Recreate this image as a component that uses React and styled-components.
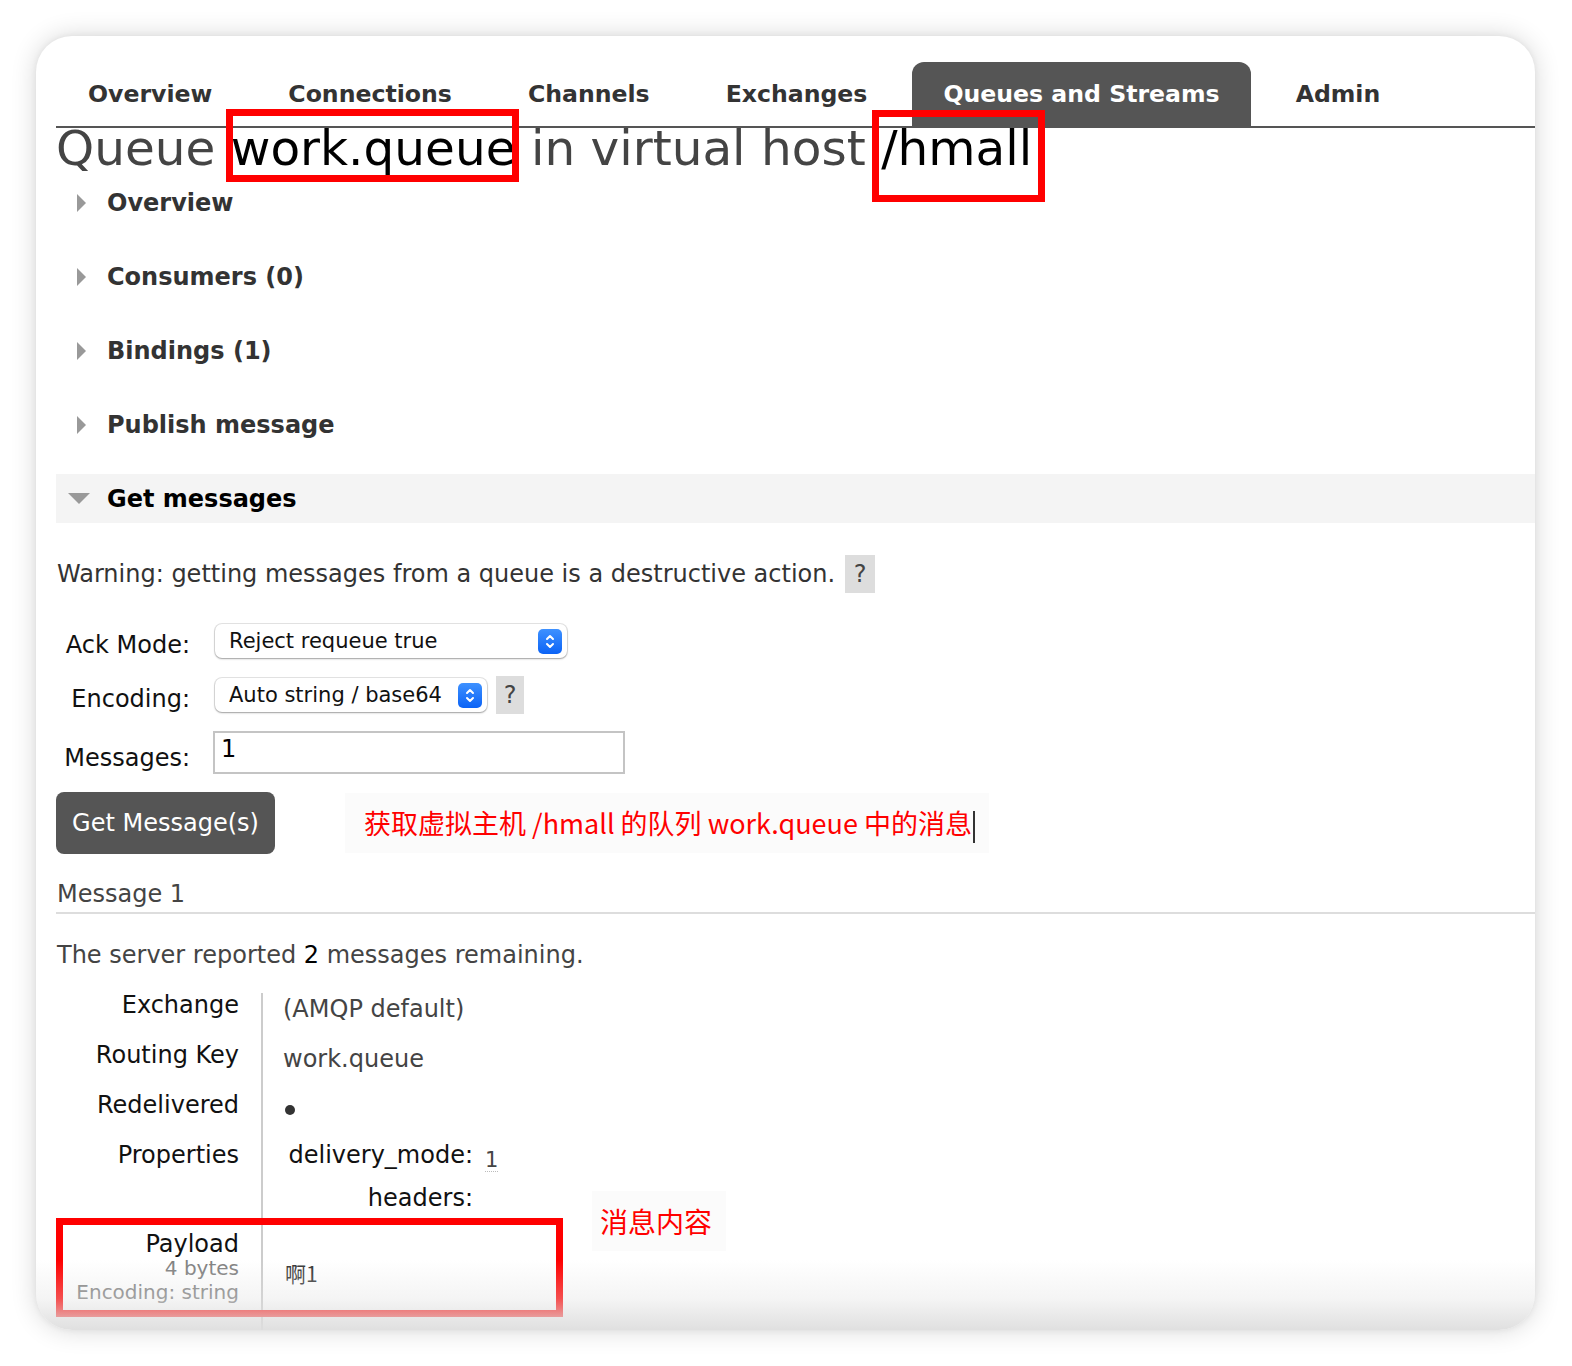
import React from "react";
import styled, { createGlobalStyle } from "styled-components";

const GlobalStyle = createGlobalStyle`
  html, body {
    margin: 0;
    padding: 0;
    background: #fff;
  }
  body {
    font-family: "DejaVu Sans", Verdana, sans-serif;
    color: #444;
  }
`;

const Page = styled.div`
  width: 1572px;
  height: 1366px;
  padding: 36px 37px 36px 36px;
  box-sizing: border-box;
`;

const Card = styled.div`
  position: relative;
  width: 1499px;
  height: 1294px;
  border-radius: 36px;
  background: #fff;
  overflow: hidden;
  box-shadow: 0 0 26px rgba(0, 0, 0, 0.16), 0 0 6px rgba(0, 0, 0, 0.06);
  padding-left: 20px;
  box-sizing: border-box;

  &::after {
    content: "";
    position: absolute;
    left: 0;
    right: 0;
    bottom: 0;
    height: 70px;
    background: linear-gradient(
      to bottom,
      rgba(225, 225, 225, 0),
      rgba(225, 225, 225, 0.35) 55%,
      rgba(222, 222, 222, 0.95)
    );
    pointer-events: none;
  }
`;

// top navigation
const Nav = styled.ul`
  display: flex;
  gap: 14px;
  list-style: none;
  margin: 26px 0 0 0;
  padding: 0 0 0 1px;
  border-bottom: 2px solid #555;
`;

const NavItem = styled.li`
  padding: 0 31px;
  height: 64px;
  line-height: 64px;
  font-size: 23.6px;
  font-weight: bold;
  color: ${(p) => (p.$active ? "#fff" : "#333")};
  background: ${(p) => (p.$active ? "#555" : "transparent")};
  border-radius: 12px 12px 0 0;
  white-space: nowrap;
`;

const Title = styled.h1`
  position: relative;
  margin: 0;
  font-size: 48.5px;
  font-weight: normal;
  line-height: 41px;
  color: #444;
  white-space: nowrap;

  b {
    font-weight: normal;
    color: #000;
  }
`;

// red annotation boxes drawn over the screenshot
const Mark = styled.span`
  position: absolute;
  border: 7px solid #ff0000;
  box-sizing: border-box;
  pointer-events: none;
`;

const Note = styled.span`
  font-family: "Noto Sans CJK SC", sans-serif;
  font-size: ${(p) => p.$size || 27}px;
  font-weight: 400;
  color: #ff0000;
  background: #fbfbfb;
  padding: 10px 14px 10px ${(p) => p.$pl || 8}px;
  white-space: nowrap;
`;

const Sections = styled.div`
  margin-top: 9px;
`;

const SectionHead = styled.div`
  display: flex;
  align-items: center;
  height: 49px;
  margin-bottom: 25px;
  font-size: 24px;
  font-weight: bold;
  color: ${(p) => (p.$open ? "#000" : "#333")};
  background: ${(p) => (p.$open ? "#f4f4f4" : "transparent")};
`;

const Toggle = styled.span`
  width: 51px;
  display: flex;
  justify-content: center;
`;

const Arrow = ({ open }) =>
  open ? (
    <svg width="22" height="12" viewBox="0 0 22 12" style={{ marginLeft: -6 }}>
      <path d="M0 0 L22 0 L11 11 Z" fill="#999" />
    </svg>
  ) : (
    <svg width="10" height="18" viewBox="0 0 10 18">
      <path d="M0 0 L9 9 L0 18 Z" fill="#999" />
    </svg>
  );

const Section = ({ title, open }) => (
  <SectionHead $open={open}>
    <Toggle>
      <Arrow open={open} />
    </Toggle>
    {title}
  </SectionHead>
);

const Warning = styled.p`
  display: flex;
  align-items: center;
  gap: 10px;
  margin: 32px 0 0 1px;
  font-size: 24px;
  color: #333;
`;

const Help = styled.span`
  display: inline-flex;
  align-items: center;
  justify-content: center;
  width: ${(p) => p.$w || 30}px;
  height: 38px;
  background: #ddd;
  color: #444;
  font-size: 24px;
`;

const Form = styled.div`
  display: grid;
  grid-template-columns: 134px auto;
  column-gap: 23px;
  row-gap: 17px;
  align-items: center;
  margin-top: 30px;
  justify-items: start;
`;

const Label = styled.label`
  justify-self: end;
  font-size: 24px;
  color: #111;
  padding-top: ${(p) => p.$drop || 8}px;
`;

const Control = styled.div`
  display: flex;
  align-items: center;
  gap: 9px;
`;

const Select = styled.div`
  display: flex;
  align-items: center;
  justify-content: space-between;
  width: ${(p) => p.$w}px;
  height: 34px;
  box-sizing: border-box;
  padding: 0 5px 0 14px;
  margin-left: 2px;
  border-radius: 7px;
  background: #fff;
  box-shadow: 0 0 0 1px rgba(0, 0, 0, 0.1), 0 1px 2px rgba(0, 0, 0, 0.3);
  font-size: 21px;
  color: #111;
`;

const Stepper = styled.span`
  display: flex;
  align-items: center;
  justify-content: center;
  width: 24px;
  height: 25px;
  border-radius: 5px;
  background: linear-gradient(#3e91ff, #0b63f6);
`;

const Chevrons = () => (
  <svg width="12" height="17" viewBox="0 0 12 17">
    <path
      d="M3 6 L6 3 L9 6 M3 11 L6 14 L9 11"
      fill="none"
      stroke="#fff"
      strokeWidth="2"
      strokeLinecap="round"
      strokeLinejoin="round"
    />
  </svg>
);

const Input = styled.div`
  width: 412px;
  height: 43px;
  box-sizing: border-box;
  border: 2px solid #c4c4c4;
  padding: 2px 6px;
  font-size: 24px;
  color: #000;
`;

const ActionRow = styled.div`
  display: flex;
  align-items: center;
  gap: 70px;
  margin-top: 18px;
`;

const Button = styled.div`
  display: flex;
  align-items: center;
  justify-content: center;
  width: 219px;
  height: 62px;
  border-radius: 8px;
  background: #555;
  color: #fff;
  font-size: 24px;
`;

const Caret = styled.span`
  display: inline-block;
  width: 2px;
  height: 32px;
  margin-left: 1px;
  vertical-align: middle;
  background: #333;
`;

const MessageHead = styled.div`
  margin-top: 26px;
  padding: 0 0 4px 1px;
  border-bottom: 2px solid #ddd;
  font-size: 24px;
  color: #444;
`;

const Remaining = styled.p`
  margin: 27px 0 0 1px;
  font-size: 24px;
  color: #444;

  b {
    font-weight: normal;
    color: #000;
  }
`;

const Details = styled.div`
  position: relative;
  display: grid;
  grid-template-columns: 207px 1fr;
  margin-top: 24px;
`;

const Th = styled.div`
  padding: 0 22px ${(p) => p.$pb ?? 26}px 0;
  border-right: 2px solid #ccc;
  text-align: right;
  font-size: 24px;
  line-height: 24px;
  color: #111;
`;

const Td = styled.div`
  display: flex;
  align-items: ${(p) => (p.$middle ? "center" : "flex-start")};
  padding: ${(p) => (p.$middle ? "0 0 4px 22px" : "4px 0 0 20px")};
  font-size: 24px;
  line-height: 24px;
  color: #444;
`;

const Sub = styled.div`
  font-size: 20px;
  color: #808080;
`;

const Dot = styled.span`
  display: inline-block;
  width: 10px;
  height: 10px;
  margin: 8px 0 0 2px;
  border-radius: 50%;
  background: #333;
`;

const Props = styled.div`
  display: grid;
  grid-template-columns: 190px auto;
  column-gap: 12px;
  row-gap: 14px;
  margin-top: -4px;
  font-size: 24px;
  line-height: 24px;
  color: #111;
`;

const PropKey = styled.span`
  text-align: right;
`;

const Abbr = styled.span`
  font-size: 21px;
  color: #444;
  border-bottom: 1px dotted #bbb;
  padding-top: 6px;
  line-height: 22px;
`;

const Payload = styled.span`
  font-family: "Noto Sans CJK SC", sans-serif;
  font-size: 21px;
  color: #333;
`;

const tabs = [
  "Overview",
  "Connections",
  "Channels",
  "Exchanges",
  "Queues and Streams",
  "Admin",
];

export default function App() {
  return (
    <Page>
      <GlobalStyle />
      <Card>
        <Nav>
          {tabs.map((t) => (
            <NavItem key={t} $active={t === "Queues and Streams"}>
              {t}
            </NavItem>
          ))}
        </Nav>

        <Title>
          Queue <b>work.queue</b> in virtual host <b>/hmall</b>
          <Mark style={{ left: 170, top: -19, width: 293, height: 73 }} />
          <Mark style={{ left: 816, top: -18, width: 173, height: 92 }} />
        </Title>

        <Sections>
          <Section title="Overview" />
          <Section title="Consumers (0)" />
          <Section title="Bindings (1)" />
          <Section title="Publish message" />
          <Section title="Get messages" open />
        </Sections>

        <div>
          <Warning>
            Warning: getting messages from a queue is a destructive action.
            <Help>?</Help>
          </Warning>

          <Form>
            <Label>Ack Mode:</Label>
            <Control>
              <Select $w={352}>
                Reject requeue true
                <Stepper>
                  <Chevrons />
                </Stepper>
              </Select>
            </Control>
            <Label>Encoding:</Label>
            <Control>
              <Select $w={272}>
                Auto string / base64
                <Stepper>
                  <Chevrons />
                </Stepper>
              </Select>
              <Help $w={28}>?</Help>
            </Control>
            <Label $drop={10}>Messages:</Label>
            <Input>1</Input>
          </Form>

          <ActionRow>
            <Button>Get Message(s)</Button>
            <Note $pl={19}>
              获取虚拟主机 /hmall 的队列 work.queue 中的消息
              <Caret />
            </Note>
          </ActionRow>

          <MessageHead>Message 1</MessageHead>
          <Remaining>
            The server reported <b>2</b> messages remaining.
          </Remaining>

          <Details>
            <Th>Exchange</Th>
            <Td>(AMQP default)</Td>
            <Th>Routing Key</Th>
            <Td>work.queue</Td>
            <Th>Redelivered</Th>
            <Td>
              <Dot />
            </Td>
            <Th $pb={65}>Properties</Th>
            <Td>
              <Props>
                <PropKey>delivery_mode:</PropKey>
                <Abbr>1</Abbr>
                <PropKey>headers:</PropKey>
                <span />
              </Props>
            </Td>
            <Th $pb={14}>
              Payload
              <Sub>4 bytes</Sub>
              <Sub>Encoding: string</Sub>
            </Th>
            <Td $middle>
              <Payload>啊1</Payload>
            </Td>
            <Th $pb={0} style={{ height: 60 }} />
            <Td />
            <Mark style={{ left: 0, top: 225, width: 507, height: 99 }} />
            <Note
              $size={28}
              style={{ position: "absolute", left: 536, top: 198 }}
            >
              消息内容
            </Note>
          </Details>
        </div>
      </Card>
    </Page>
  );
}
